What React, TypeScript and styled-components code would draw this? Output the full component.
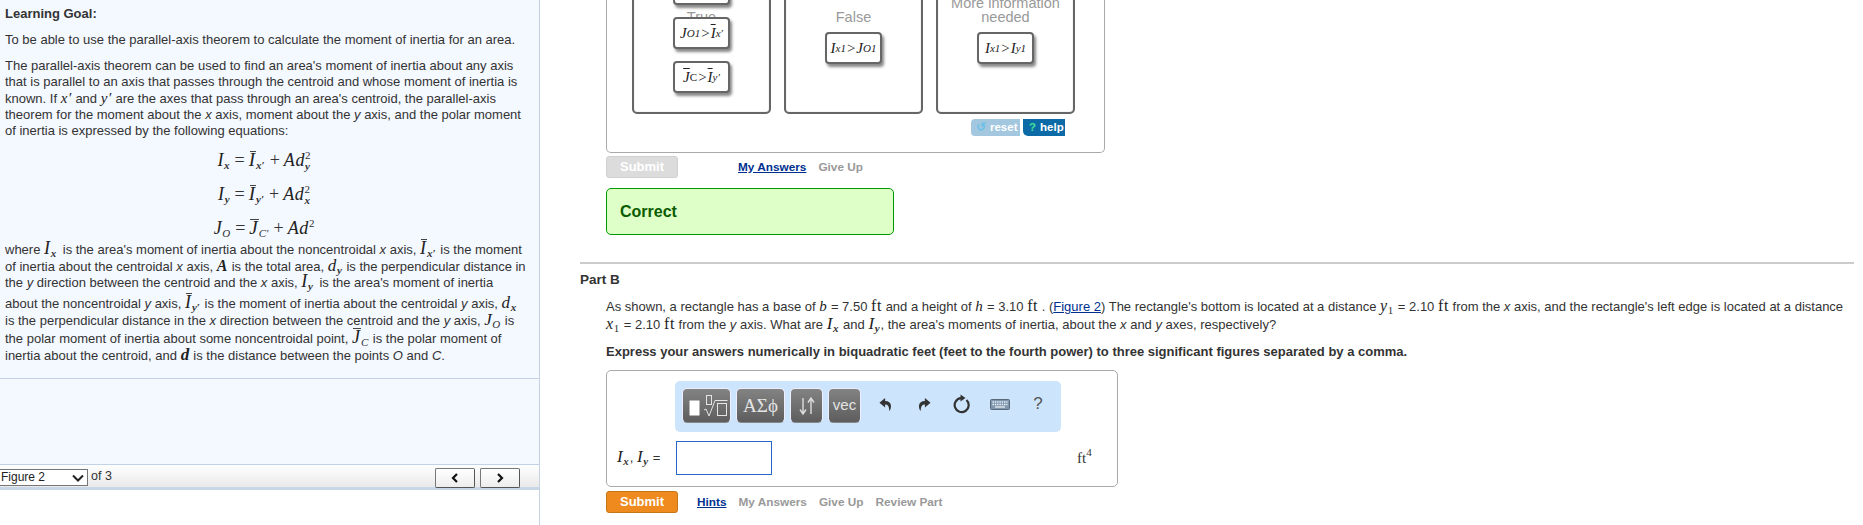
import React from 'react';
import styled, { createGlobalStyle } from 'styled-components';

const GlobalStyle = createGlobalStyle`
  html, body { margin: 0; padding: 0; background: #fff; }
  body { font-family: "Liberation Sans", Arial, sans-serif; font-size: 13px; line-height: 16.25px; color: #333; }
`;

const Page = styled.div`
  display: flex;
  width: 1863px;
  height: 525px;
  overflow: hidden;
`;

/* left column */
const LeftColumn = styled.div`
  flex: 0 0 540px;
  display: flex;
  flex-direction: column;
  box-sizing: border-box;
  border-right: 1px solid #c3d3e4;
  background: #f4f8ff;
`;

const InfoPanel = styled.div`
  box-sizing: border-box;
  height: 379px;
  padding: 6px 10px 0 5px;
  border-bottom: 1px solid #c3d3e4;
`;

const Spacer = styled.div`
  height: 85px;
`;

const Para = styled.p`
  margin: 0 0 9.5px;
`;

const Goal = styled.h4`
  margin: 0 0 10px;
  font-size: 13px;
  font-weight: bold;
  line-height: 16.25px;
`;

const Tight = styled.p`
  margin: 3px 0 0;
`;

const EquationList = styled.div`
  display: flex;
  flex-direction: column;
  align-items: center;
  gap: 12px;
  margin: 10px 0 0;
  padding-right: 6px;
  font-size: 18px;
`;

const Equation = styled.div`
  height: 22px;
  font-family: "Liberation Serif", serif;
  line-height: 22px;
  white-space: nowrap;
`;

const M = styled.i`
  font-family: "Liberation Serif", serif;
  font-size: ${p => p.$size || 15}px;
  font-style: ${p => (p.$upright ? 'normal' : 'italic')};
  font-weight: ${p => (p.$bold ? 'bold' : 'normal')};
  line-height: 0;
  letter-spacing: 0.6px;
  color: #222;
`;

// overlined symbol; $above / $below stretch the line it sits on, as the tall math boxes do
const Bar = styled.span`
  display: inline-block;
  position: relative;
  line-height: 12px;
  padding: ${p => p.$above || 0}px 1px ${p => p.$below || 0}px 0;
  font-family: "Liberation Serif", serif;
  font-style: italic;
  font-size: ${p => p.$size || 18}px;
  color: #222;
  &::before {
    content: '';
    position: absolute;
    left: 1px;
    right: 0;
    top: ${p => (p.$above || 0) - 3}px;
    border-top: 1px solid #444;
  }
`;

const Sub = styled.sub`
  font-family: "Liberation Serif", serif;
  font-size: ${p => p.$size || 11}px;
  font-style: ${p => (p.$upright ? 'normal' : 'italic')};
  font-weight: ${p => (p.$bold ? 'bold' : 'normal')};
  line-height: 0;
  vertical-align: -3px;
  margin-right: ${p => p.$gap ?? 1}px;
`;

const Sup = styled.sup`
  font-family: "Liberation Serif", serif;
  font-size: 11px;
  line-height: 0;
  vertical-align: 7px;
`;

const SubSup = styled.span`
  display: inline-flex;
  flex-direction: column;
  vertical-align: 7px;
  font-family: "Liberation Serif", serif;
  font-size: 11px;
  line-height: 11px;
  font-style: italic;
  font-weight: bold;
  span { font-style: normal; font-weight: normal; }
`;

const Op = styled.span`
  margin: 0 4px;
`;

const Em = styled.i`
  font-style: italic;
`;

const FigureBar = styled.div`
  box-sizing: border-box;
  height: 26px;
  display: flex;
  align-items: flex-start;
  padding: 4px 19px 0 0;
  border-top: 1px solid #c3d3e4;
  border-bottom: 3px solid #c9d7e6;
  background: linear-gradient(#fff, #e9e9e9);
`;

const FigureSelect = styled.div`
  box-sizing: border-box;
  width: 89px;
  height: 17px;
  margin-left: -1px;
  display: flex;
  align-items: center;
  justify-content: space-between;
  padding: 0 3px 0 1px;
  border: 1px solid #767676;
  background: #fff;
  color: #222;
  font-size: 12px;
`;

const OfLabel = styled.span`
  margin-left: 3px;
  font-size: 12.5px;
  flex: 1;
  line-height: 15px;
`;

const NavButton = styled.div`
  box-sizing: border-box;
  width: 40px;
  height: 20px;
  margin-left: 5px;
  margin-top: -1px;
  display: flex;
  align-items: center;
  justify-content: center;
  border: 1px solid #777;
  border-right-color: #555;
  border-bottom-color: #555;
  border-radius: 2px;
  background: linear-gradient(#fff, #ededed);
`;

const WhiteArea = styled.div`
  flex: 1;
  background: #fff;
`;

/* right column */
const RightColumn = styled.div`
  flex: 1;
  min-width: 0;
  padding: 0 9px 0 40px;
`;

const Indent = styled.div`
  margin-left: 26px;
`;

const DragCard = styled.div`
  box-sizing: border-box;
  width: 499px;
  height: 213px;
  margin-top: -60px;
  padding: 20px 28px 0 25px;
  border: 1px solid #aaa;
  border-top: none;
  border-radius: 0 0 5px 5px;
`;

const BucketRow = styled.div`
  display: flex;
  gap: 13px;
`;

const Bucket = styled.div`
  box-sizing: border-box;
  flex: 0 0 139px;
  height: 154px;
  display: flex;
  flex-direction: column;
  align-items: center;
  border: 2px solid #666;
  border-radius: 5px;
  box-shadow: inset 0 0 1px #999;
`;

const BucketLabel = styled.div`
  flex: 0 0 62px;
  box-sizing: border-box;
  display: flex;
  flex-direction: column;
  justify-content: flex-end;
  text-align: center;
  color: #999;
  font-size: 14.5px;
  line-height: 14px;
`;

const TileList = styled.div`
  display: flex;
  flex-direction: column;
  gap: 12px;
  margin-top: ${p => p.$offset}px;
`;

const Tile = styled.div`
  position: relative;
  z-index: 1;
  box-sizing: border-box;
  width: 57px;
  height: 32px;
  display: flex;
  align-items: center;
  justify-content: center;
  border: 2px solid #666;
  border-radius: 4px;
  background: #fff;
  box-shadow: 2px 3px 3px #888;
  font-family: "Liberation Serif", serif;
  font-size: 15px;
  white-space: nowrap;
  color: #222;
`;

const TileMath = styled.i`
  font-size: 15px;
  font-style: italic;
`;

const TileSub = styled.sub`
  font-size: 11px;
  line-height: 0;
  vertical-align: -3px;
  font-style: ${p => (p.$upright ? 'normal' : 'italic')};
`;

const TileGt = styled.span`
  margin: 0 1px;
`;

const TileBar = styled.span`
  font-style: italic;
  text-decoration: overline;
  text-decoration-thickness: 1px;
`;

const WidgetTools = styled.div`
  display: flex;
  justify-content: flex-end;
  gap: 3px;
  margin: 5px 11px 0 0;
`;

const ResetButton = styled.div`
  box-sizing: border-box;
  width: 49px;
  height: 17px;
  padding-left: 5px;
  background: #a3c7de;
  border-radius: 4px 0 0 4px;
  color: #fff;
  font-size: 11.5px;
  font-weight: bold;
  line-height: 17px;
  white-space: nowrap;
  span { color: #6cc0e8; margin-right: 4px; }
`;

const HelpButton = styled.div`
  box-sizing: border-box;
  width: 42px;
  height: 17px;
  padding-left: 6px;
  background: #0c6aa6;
  border-radius: 0 0 0 5px;
  color: #fff;
  font-size: 11.5px;
  font-weight: bold;
  line-height: 17px;
  white-space: nowrap;
  span { color: #42e09a; margin-right: 4px; }
`;

const ActionRow = styled.div`
  display: flex;
  align-items: center;
  margin-top: ${p => p.$top}px;
  height: 22px;
  font-weight: bold;
  font-size: 11.8px;
`;

const SubmitButton = styled.div`
  box-sizing: border-box;
  width: 72px;
  height: 22px;
  margin-right: ${p => p.$gap}px;
  text-align: center;
  border: 1px solid ${p => (p.$active ? '#c4761a' : '#d0d0d0')};
  border-radius: 3px;
  background: ${p => (p.$active ? '#ef8a1e' : '#dcdcdc')};
  color: #fff;
  font-size: 13px;
  font-weight: bold;
  line-height: 20px;
`;

const ActionLink = styled.a`
  margin-right: 12px;
  color: ${p => (p.$on ? '#00308f' : '#999')};
  text-decoration: ${p => (p.$on ? 'underline' : 'none')};
`;

const Correct = styled.div`
  box-sizing: border-box;
  width: 288px;
  height: 47px;
  margin-top: 10px;
  padding: 2px 0 0 13px;
  display: flex;
  align-items: center;
  border: 1px solid #090;
  border-radius: 5px;
  background: #dfffc9;
  color: #0b5b00;
  font-size: 16px;
  font-weight: bold;
`;

const Rule = styled.hr`
  height: 2px;
  margin: 27px 0 0;
  border: none;
  background: #ccc;
`;

const PartTitle = styled.h4`
  margin: 7px 0 0;
  font-size: 13.5px;
  line-height: 17px;
  font-weight: bold;
`;

const Question = styled.p`
  margin: 10px 0 0;
  line-height: 17.5px;
`;

const Instruction = styled.p`
  margin: 10px 0 0;
  font-weight: bold;
  line-height: 17px;
`;

const FigureLink = styled.a`
  color: #00308f;
  text-decoration: underline;
`;

const AnswerCard = styled.div`
  box-sizing: border-box;
  width: 512px;
  height: 117px;
  margin-top: 10px;
  padding: 10px 10px 0 10px;
  border: 1px solid #aaa;
  border-radius: 5px;
  display: flex;
  flex-direction: column;
`;

const Toolbar = styled.div`
  box-sizing: border-box;
  width: 386px;
  height: 51px;
  margin-left: 58px;
  padding: 7px 0 0 7px;
  display: flex;
  align-items: flex-start;
  gap: 5px;
  background: #cde4fd;
  border-radius: 5px;
`;

const ToolButton = styled.div`
  box-sizing: border-box;
  width: ${p => p.$w}px;
  height: 35px;
  display: flex;
  align-items: center;
  justify-content: center;
  gap: 2px;
  border: 1px solid #eef;
  border-bottom-color: #888;
  border-radius: 5px;
  background: linear-gradient(#838383, #5d5d5d);
  color: #e4e4e4;
  font-family: ${p => (p.$serif ? '"Liberation Serif", serif' : '"Liberation Sans", sans-serif')};
  font-size: ${p => p.$font || 16}px;
  line-height: 1;
  padding-bottom: ${p => p.$lift || 0}px;
`;

const IconGroup = styled.div`
  display: flex;
  margin-left: 1px;
`;

const IconSlot = styled.div`
  width: 38px;
  height: 32px;
  display: flex;
  align-items: center;
  justify-content: center;
  color: #555;
  font-size: 17px;
`;

const AnswerRow = styled.div`
  display: flex;
  align-items: center;
  margin-top: 9px;
`;

const AnswerLabel = styled.div`
  width: 59px;
  font-size: 13px;
  white-space: nowrap;
`;

const AnswerInput = styled.div`
  box-sizing: border-box;
  width: 96px;
  height: 34px;
  border: 1px solid #2a66c8;
  background: #fff;
`;

const Unit = styled.div`
  margin-left: 305px;
  font-family: "Liberation Serif", serif;
  font-size: 15px;
  color: #333;
`;

const Chevron = ({ dir }: { dir: 'left' | 'right' }) => (
  <svg width="8" height="10" viewBox="0 0 8 10">
    <path
      d={dir === 'left' ? 'M6 1 2 5l4 4' : 'M2 1l4 4-4 4'}
      fill="none"
      stroke="#111"
      strokeWidth="2.2"
    />
  </svg>
);

const SelectArrow = () => (
  <svg width="12" height="8" viewBox="0 0 12 8">
    <path d="M1 1.5 6 6.5l5-5" fill="none" stroke="#222" strokeWidth="2" />
  </svg>
);

const TemplateIcon = () => (
  <svg width="42" height="30" viewBox="0 0 42 30">
    <rect x="3.500" y="9.500" width="10" height="15" fill="#fff" />
    <rect x="20.500" y="4.500" width="5" height="9" fill="none" stroke="#e4e4e4" />
    <path d="M18 19l2-1 3 7 6-15.500h12.500" fill="none" stroke="#e4e4e4" />
    <rect x="31.500" y="12.500" width="9" height="12" fill="none" stroke="#e4e4e4" />
  </svg>
);

const ArrowsIcon = () => (
  <svg width="18" height="20" viewBox="0 0 18 20">
    <path d="M5 2v15M2 13.5 5 18l3-4.5M13 18V3M10 6.500 13 2l3 4.500" fill="none" stroke="#ddd" strokeWidth="1.4" />
  </svg>
);

const UndoIcon = ({ flip }: { flip?: boolean }) => (
  <svg width="14" height="15" viewBox="0 0 16 17" style={flip ? { transform: 'scaleX(-1)' } : undefined}>
    <path d="M7 1 0.500 6.500 7 12V8.500c3 0 4.500 1.500 4.800 7.500C14.500 13 15.500 4.500 7 4.500Z" fill="#333" />
  </svg>
);

const ReloadIcon = () => (
  <svg width="18" height="20" viewBox="0 0 18 20">
    <path d="M13.500 6A7 7 0 1 1 8 4.100" fill="none" stroke="#333" strokeWidth="2.200" />
    <path d="M7.500 0.500 12.500 4 7.500 7.500Z" fill="#333" />
  </svg>
);

const KeyboardIcon = () => (
  <svg width="20" height="11" viewBox="0 0 20 11">
    <rect x="0.500" y="0.500" width="19" height="10" rx="1" fill="#7f97ae" stroke="#5a6878" />
    <path d="M2.500 3h15M2.500 5.500h15" stroke="#e8eef5" strokeWidth="1.300" strokeDasharray="1.500 0.800" />
    <path d="M5 8h10" stroke="#e8eef5" strokeWidth="1.300" />
  </svg>
);

const App = () => (
  <>
    <GlobalStyle />
    <Page>
      <LeftColumn>
        <InfoPanel>
          <Goal>Learning Goal:</Goal>
          <Para>To be able to use the parallel-axis theorem to calculate the moment of inertia for an area.</Para>
          <Para>
            The parallel-axis theorem can be used to find an area's moment of inertia about any axis that is parallel
            to an axis that passes through the centroid and whose moment of inertia is known. If <M>x′</M> and{' '}
            <M>y′</M> are the axes that pass through an area's centroid, the parallel-axis theorem for the moment about
            the <Em>x</Em> axis, moment about the <Em>y</Em> axis, and the polar moment of inertia is expressed by the
            following equations:
          </Para>
          <EquationList>
            <Equation>
              <M $size={18}>I</M><Sub $bold>x</Sub><Op>=</Op><Bar $size={19}>I</Bar><Sub $bold>x′</Sub><Op>+</Op><M $size={18}>Ad</M>
              <SubSup><span>2</span>y</SubSup>
            </Equation>
            <Equation>
              <M $size={18}>I</M><Sub $bold>y</Sub><Op>=</Op><Bar $size={19}>I</Bar><Sub $bold>y′</Sub><Op>+</Op><M $size={18}>Ad</M>
              <SubSup><span>2</span>x</SubSup>
            </Equation>
            <Equation>
              <M $size={18}>J</M><Sub>O</Sub><Op>=</Op><Bar $size={19}>J</Bar><Sub>C′</Sub><Op>+</Op><M $size={18}>Ad</M><Sup>2</Sup>
            </Equation>
          </EquationList>
          <Tight>
            where <M $size={18}>I</M><Sub $bold $gap={3}>x</Sub> is the area's moment of inertia about the noncentroidal{' '}
            <Em>x</Em> axis, <Bar>I</Bar><Sub $bold>x′</Sub> is the moment of inertia about the centroidal <Em>x</Em>{' '}
            axis, <M $size={16} $bold>A</M> is the total area, <M $size={17}>d</M><Sub $bold>y</Sub> is the
            perpendicular distance in the <Em>y</Em> direction between the centroid and the <Em>x</Em> axis,{' '}
            <M $size={18}>I</M><Sub $bold $gap={3}>y</Sub> is the area's moment of inertia about the noncentroidal <Em>y</Em>{' '}
            axis, <Bar $above={5} $below={5}>I</Bar><Sub $bold>y′</Sub> is the moment of inertia about the centroidal <Em>y</Em> axis,{' '}
            <M $size={17}>d</M><Sub $bold>x</Sub> is the perpendicular distance in the <Em>x</Em> direction between the
            centroid and the <Em>y</Em> axis, <M $size={17}>J</M><Sub>O</Sub> is the polar moment of inertia about some
            noncentroidal point, <Bar $above={2}>J</Bar><Sub>C</Sub> is the polar moment of inertia about the centroid, and{' '}
            <M $size={17} $bold>d</M> is the distance between the points <Em>O</Em> and <Em>C</Em>.
          </Tight>
        </InfoPanel>
        <Spacer />
        <FigureBar>
          <FigureSelect>
            Figure 2
            <SelectArrow />
          </FigureSelect>
          <OfLabel>of 3</OfLabel>
          <NavButton><Chevron dir="left" /></NavButton>
          <NavButton><Chevron dir="right" /></NavButton>
        </FigureBar>
        <WhiteArea />
      </LeftColumn>

      <RightColumn>
        <Indent>
          <DragCard>
            <BucketRow>
              <Bucket>
                <BucketLabel>True</BucketLabel>
                <TileList $offset={-51}>
                  <Tile>
                    <TileMath>I</TileMath><TileSub>x1</TileSub><TileGt>&gt;</TileGt><TileMath>J</TileMath><TileSub>C</TileSub>
                  </Tile>
                  <Tile>
                    <TileMath>J</TileMath><TileSub>O1</TileSub><TileGt>&gt;</TileGt><TileBar>I</TileBar><TileSub>x′</TileSub>
                  </Tile>
                  <Tile>
                    <TileBar>J</TileBar><TileSub $upright>C</TileSub><TileGt>&gt;</TileGt><TileBar>I</TileBar><TileSub>y′</TileSub>
                  </Tile>
                </TileList>
              </Bucket>
              <Bucket>
                <BucketLabel>False</BucketLabel>
                <TileList $offset={8}>
                  <Tile>
                    <TileMath>I</TileMath><TileSub>x1</TileSub><TileGt>&gt;</TileGt><TileMath>J</TileMath><TileSub>O1</TileSub>
                  </Tile>
                </TileList>
              </Bucket>
              <Bucket>
                <BucketLabel>More information<br />needed</BucketLabel>
                <TileList $offset={8}>
                  <Tile>
                    <TileMath>I</TileMath><TileSub>x1</TileSub><TileGt>&gt;</TileGt><TileMath>I</TileMath><TileSub>y1</TileSub>
                  </Tile>
                </TileList>
              </Bucket>
            </BucketRow>
            <WidgetTools>
              <ResetButton><span>↺</span>reset</ResetButton>
              <HelpButton><span>?</span>help</HelpButton>
            </WidgetTools>
          </DragCard>
          <ActionRow $top={3}>
            <SubmitButton $gap={60}>Submit</SubmitButton>
            <ActionLink $on>My Answers</ActionLink>
            <ActionLink>Give Up</ActionLink>
          </ActionRow>
          <Correct>Correct</Correct>
        </Indent>

        <Rule />
        <PartTitle>Part B</PartTitle>

        <Indent>
          <Question>
            As shown, a rectangle has a base of <M>b</M> = 7.50 <M $upright $size={16}>ft</M> and a height of <M>h</M> = 3.10{' '}
            <M $upright $size={16}>ft</M> . (<FigureLink>Figure 2</FigureLink>) The rectangle's bottom is located at a distance{' '}
            <M $size={16}>y</M><Sub $upright>1</Sub> = 2.10 <M $upright $size={16}>ft</M> from the <Em>x</Em> axis, and the
            rectangle's left edge is located at a distance <M $size={16}>x</M><Sub $upright>1</Sub> = 2.10{' '}
            <M $upright $size={16}>ft</M> from the <Em>y</Em> axis. What are <M $size={17}>I</M><Sub $bold>x</Sub> and{' '}
            <M $size={17}>I</M><Sub $bold>y</Sub>, the area's moments of inertia, about the <Em>x</Em> and <Em>y</Em>{' '}
            axes, respectively?
          </Question>
          <Instruction>
            Express your answers numerically in biquadratic feet (feet to the fourth power) to three significant figures
            separated by a comma.
          </Instruction>
          <AnswerCard>
            <Toolbar>
              <ToolButton $w={49}><TemplateIcon /></ToolButton>
              <ToolButton $w={49} $serif $font={19}>ΑΣϕ</ToolButton>
              <ToolButton $w={33}><ArrowsIcon /></ToolButton>
              <ToolButton $w={33} $font={15} $lift={2}>vec</ToolButton>
              <IconGroup>
                <IconSlot><UndoIcon /></IconSlot>
                <IconSlot><UndoIcon flip /></IconSlot>
                <IconSlot><ReloadIcon /></IconSlot>
                <IconSlot><KeyboardIcon /></IconSlot>
                <IconSlot>?</IconSlot>
              </IconGroup>
            </Toolbar>
            <AnswerRow>
              <AnswerLabel>
                <M $size={17}>I</M><Sub $bold>x</Sub>, <M $size={17}>I</M><Sub $bold>y</Sub> =
              </AnswerLabel>
              <AnswerInput />
              <Unit>ft<Sup>4</Sup></Unit>
            </AnswerRow>
          </AnswerCard>
          <ActionRow $top={4}>
            <SubmitButton $active $gap={19}>Submit</SubmitButton>
            <ActionLink $on>Hints</ActionLink>
            <ActionLink>My Answers</ActionLink>
            <ActionLink>Give Up</ActionLink>
            <ActionLink>Review Part</ActionLink>
          </ActionRow>
        </Indent>
      </RightColumn>
    </Page>
  </>
);

export default App;
